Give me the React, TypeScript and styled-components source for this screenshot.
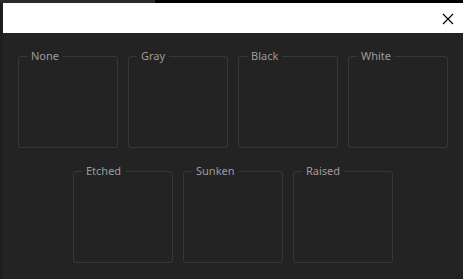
import React from "react"
import styled, { createGlobalStyle } from "styled-components"

const GlobalStyle = createGlobalStyle`
  html, body {
    margin: 0;
    padding: 0;
    background: #232323;
  }
  body {
    font-family: "Noto Sans", "DejaVu Sans", sans-serif;
  }
`

const topRow = ["None", "Gray", "Black", "White"]
const bottomRow = ["Etched", "Sunken", "Raised"]

const App = () => {
  return (
    <>
      <GlobalStyle />
      <Window>
        <TopStrip>
          <span />
        </TopStrip>
        <Body>
          <SideStrip />
          <Main>
            <TitleBar>
              <CloseButton aria-label="Close">
                <svg width="12" height="12" viewBox="0 0 12 12">
                  <path d="M1 1 L11 11 M11 1 L1 11" stroke="#000" strokeWidth="1.2" fill="none" />
                </svg>
              </CloseButton>
            </TitleBar>
            <Content>
              <Row>
                {topRow.map((name) => (
                  <Group key={name}>
                    <Legend>{name}</Legend>
                  </Group>
                ))}
              </Row>
              <Row>
                {bottomRow.map((name) => (
                  <Group key={name}>
                    <Legend>{name}</Legend>
                  </Group>
                ))}
              </Row>
            </Content>
          </Main>
        </Body>
      </Window>
    </>
  )
}

export default App

const Window = styled.div`
  width: 463px;
  height: 279px;
  display: flex;
  flex-direction: column;
  overflow: hidden;
`

const TopStrip = styled.div`
  height: 3px;
  background: #000;
  display: flex;
  span {
    width: 155px;
    background: #2b2b2b;
  }
`

const Body = styled.div`
  flex: 1;
  display: flex;
`

const SideStrip = styled.div`
  width: 3px;
  background: #1e1e1e;
`

const Main = styled.div`
  flex: 1;
  display: flex;
  flex-direction: column;
`

const TitleBar = styled.div`
  height: 30px;
  background: #fff;
  display: flex;
  align-items: center;
  justify-content: flex-end;
  padding-right: 9px;
`

const CloseButton = styled.button`
  all: unset;
  width: 12px;
  height: 12px;
  display: flex;
  margin-top: 1px;
`

const Content = styled.div`
  display: flex;
  flex-direction: column;
  align-items: center;
  gap: 16px;
  padding-top: 16px;
`

const Row = styled.div`
  display: flex;
  gap: 10px;
`

const Group = styled.fieldset`
  box-sizing: border-box;
  margin: 0;
  padding: 0;
  width: 100px;
  height: 99px;
  border: 1px solid #383838;
  border-radius: 3px;
  min-width: 0;
`

const Legend = styled.legend`
  margin-left: 8px;
  padding: 0 4px;
  font-size: 11px;
  line-height: 14px;
  color: #9c9c9c;
`
